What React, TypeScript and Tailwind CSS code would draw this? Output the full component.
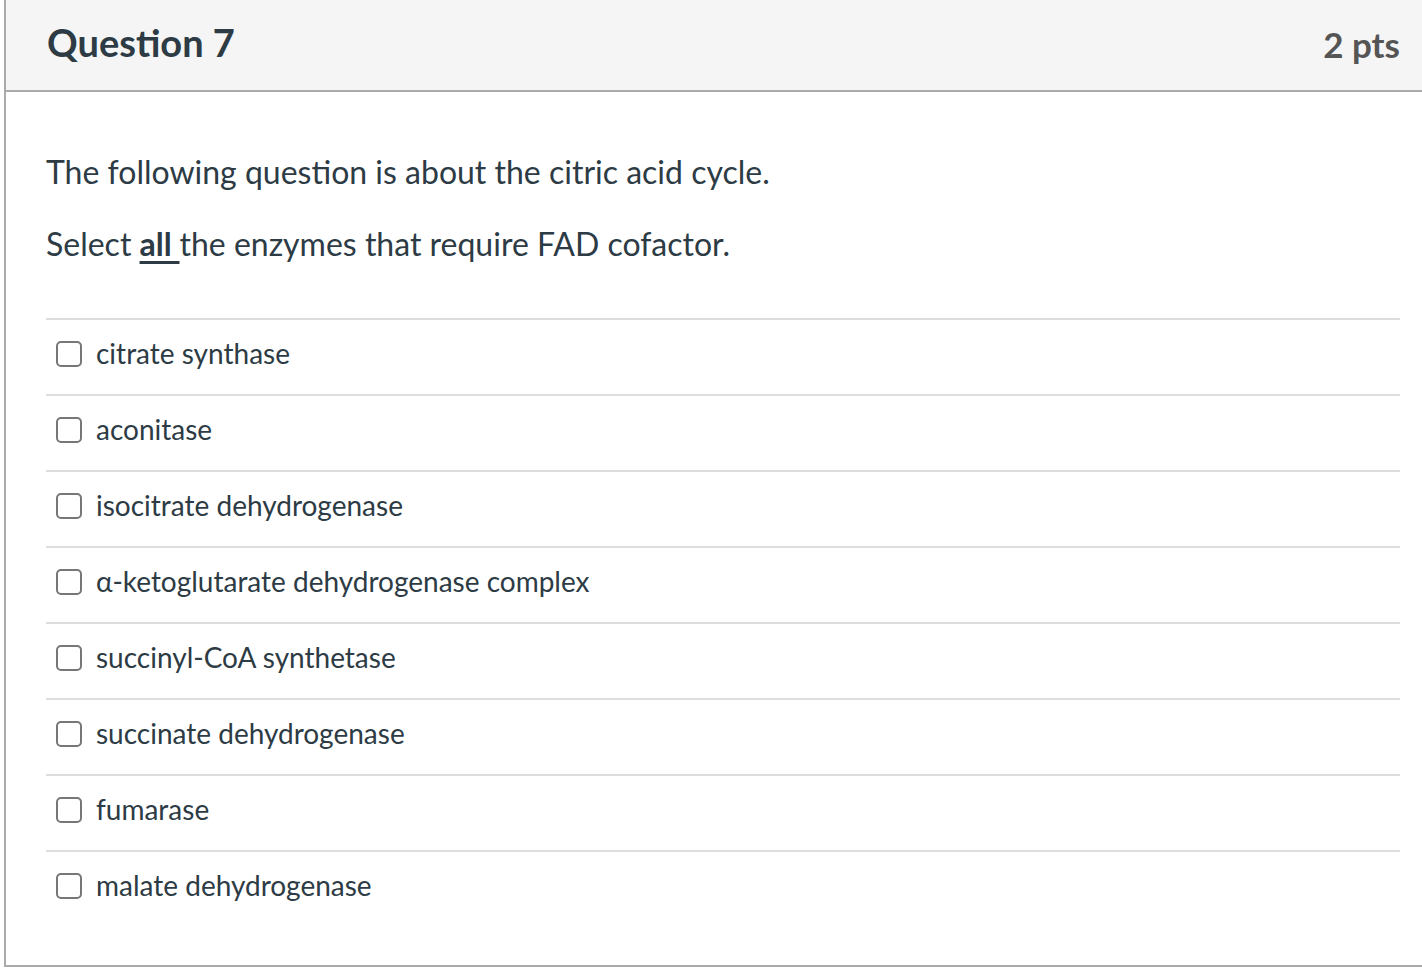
const options = [
  'citrate synthase',
  'aconitase',
  'isocitrate dehydrogenase',
  'α-ketoglutarate dehydrogenase complex',
  'succinyl-CoA synthetase',
  'succinate dehydrogenase',
  'fumarase',
  'malate dehydrogenase',
];

const App = () => {
  return (
    <div className="w-[1422px] h-[970px] overflow-hidden bg-white font-['Lato',sans-serif] text-[#2d3b45]">
      <div className="ml-[4px] w-[1460px] border-l-2 border-b-2 border-[#aaaaaa]">
        <div className="h-[92px] bg-[#f5f5f5] border-b-2 border-[#aaaaaa] flex items-center justify-between pl-[41px] pr-[64px]">
          <h2 className="text-[38px] font-bold leading-none -mt-[6px]">Question 7</h2>
          <span className="text-[35px] font-bold text-[#555555] leading-none -mt-[2px]">2 pts</span>
        </div>
        <div className="pl-[40px] pr-[64px] pt-[57px] pb-[39px]">
          <p className="text-[32px] leading-[45px]">The following question is about the citric acid cycle.</p>
          <p className="text-[32px] leading-[45px] mt-[27px]">
            Select <span className="font-bold underline underline-offset-[5px] decoration-[3px]">all </span>the enzymes that require FAD cofactor.
          </p>
          <div className="mt-[52px]">
            {options.map((opt) => (
              <div key={opt} className="border-t-2 border-[#dddddd] h-[76px] flex items-start pt-[13px] pl-[10px]">
                <div className="flex items-center h-[40px] gap-[14px]">
                  <span className="w-[26px] h-[26px] rounded-[5px] border-2 border-[#777777] bg-white mt-[2px]" />
                  <span className="text-[28px] leading-[40px]">{opt}</span>
                </div>
              </div>
            ))}
          </div>
        </div>
      </div>
    </div>
  );
};

export default App;
